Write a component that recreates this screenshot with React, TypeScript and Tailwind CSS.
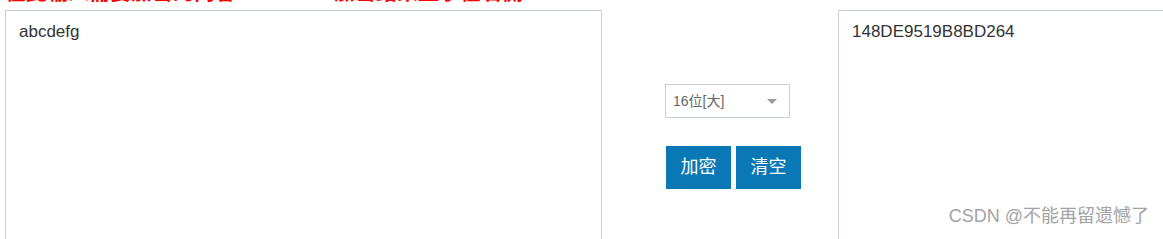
import React from 'react';

const boxClass =
  "shrink-0 h-[260px] border border-[#c6cfdb] bg-white pl-[13px] pt-2 text-[17px] leading-[1.5] text-[#333] resize-none outline-none font-['Liberation_Sans','Noto_Sans_CJK_SC',sans-serif]";

export default function App() {
  return (
    <div className="relative w-[1163px] h-[239px] overflow-hidden bg-white font-['Liberation_Sans','Noto_Sans_CJK_SC',sans-serif]">
      {/* title row, cut off at the top of the shot */}
      <div className="flex h-[10px] items-end pl-[5px] text-[21px] font-bold text-[#ff0000]">
        <span className="mb-[8px] leading-[21px] whitespace-nowrap">在此输入需要加密的内容</span>
        <span className="mb-[8px] ml-[98px] leading-[21px] whitespace-nowrap">加密结果显示在右侧</span>
      </div>

      <div className="flex pl-[5px]">
        <textarea readOnly defaultValue="abcdefg" className={`${boxClass} w-[597px]`} />

        <div className="flex w-[236px] shrink-0 flex-col pl-[63px] pt-[74px]">
          <div className="flex h-[34px] w-[125px] items-center justify-between border border-[#c8cfdb] bg-white pl-[7px] pr-[12px] text-[14px] text-[#666]">
            <span>16位[大]</span>
            <svg width="10" height="5" viewBox="0 0 10 5">
              <polygon points="0,0 10,0 5,5" fill="#999" />
            </svg>
          </div>
          <div className="mt-[28px] ml-[1px] flex gap-[5px]">
            <button className="h-[43px] w-[65px] bg-[#0a78b4] text-[18px] text-white">加密</button>
            <button className="h-[43px] w-[65px] bg-[#0a78b4] text-[18px] text-white">清空</button>
          </div>
        </div>

        <textarea readOnly defaultValue="148DE9519B8BD264" className={`${boxClass} w-[400px]`} />
      </div>

      <div className="absolute right-[14px] bottom-[9px] text-[18px] text-[#a3a3a3] whitespace-nowrap">
        CSDN @不能再留遗憾了
      </div>
    </div>
  );
}
